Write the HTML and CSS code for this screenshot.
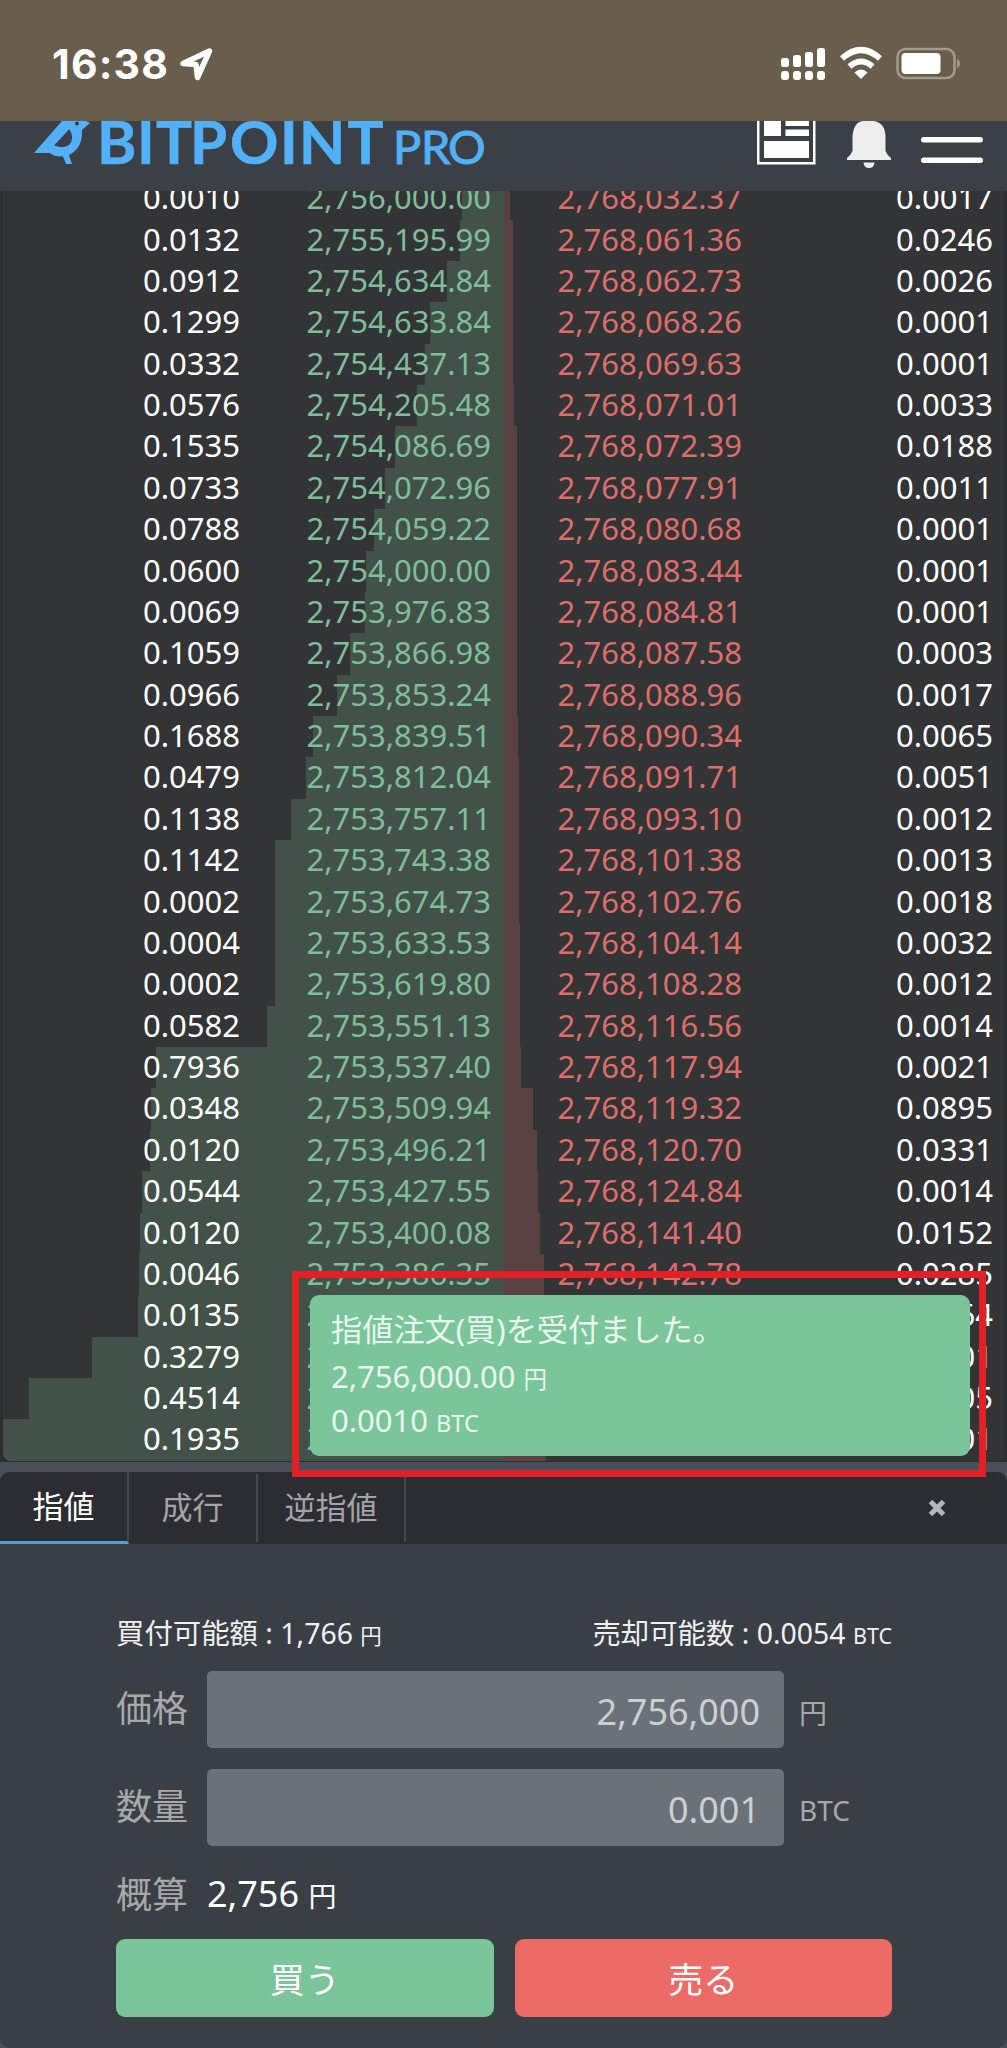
FILE: index.html
```html
<!DOCTYPE html>
<html lang="ja">
<head>
  <meta charset="UTF-8" />
  <meta name="viewport" content="width=device-width, initial-scale=1.0" />
  <title>BITPOINT PRO</title>
  <link rel="stylesheet" href="styles.css">
</head>
<body>
  <div class="app">

    <!-- Status bar -->
    <div class="status-bar">
      <div class="status-left">
        <span class="clock">16:38</span>
        <svg class="location" width="36" height="36" viewBox="0 0 36 36">
          <path d="M30.500 5 L18.500 31.500 L17 18.500 L4 17.500 Z" />
        </svg>
      </div>
      <div class="status-right">
        <svg width="46" height="36" viewBox="0 0 46 36" fill="#fff">
          <rect x="1" y="12" width="8" height="9" rx="2.5" />
          <rect x="13" y="9" width="8" height="12" rx="2.5" />
          <rect x="25" y="6" width="8" height="15" rx="2.5" />
          <rect x="37" y="2" width="8" height="19" rx="2.5" />
          <rect x="1" y="25" width="8" height="9" rx="3" />
          <rect x="13" y="25" width="8" height="9" rx="3" />
          <rect x="25" y="25" width="8" height="9" rx="3" />
          <rect x="37" y="25" width="8" height="9" rx="3" />
        </svg>
        <svg class="wifi" width="44" height="36" viewBox="0 0 44 36">
          <path d="M3 12.5 Q22 -4.500 41 12.500" />
          <path d="M10.500 20.500 Q22 10.500 33.500 20.500" />
          <path class="wifi-dot" d="M22 33 L15.500 26.500 Q22 20.500 28.500 26.500 Z" />
        </svg>
        <svg class="battery" width="66" height="36" viewBox="0 0 66 36">
          <rect x="1.5" y="3" width="57" height="29" rx="8" />
          <path class="nub" d="M61 13 Q64 14.500 64 17.500 Q64 20.500 61 22 Z" />
          <rect class="level" x="5.500" y="7" width="39" height="21" rx="4" />
        </svg>
      </div>
    </div>

    <!-- Header -->
    <header class="header">
      <svg class="logo" width="460" height="70" viewBox="0 0 460 70">
        <path fill-rule="evenodd" d="M0 32 L28 0 H52 L56 2 L48 9 Q49 27 35 34 L38 43 H32 L29 35.500 Q20 36 16 32 Z M20 24.500 L35.500 8 Q41 18 35 24 Q30 28 20 24.500 Z" />
        <circle class="eye" cx="43" cy="2.500" r="2" />
        <text class="logo-main" x="63 103 122 156 196 246 265 313.5" y="43">BITPOINT</text>
        <text class="logo-sub" x="359 387 414" y="43">PRO</text>
      </svg>
      <div class="header-icons">
        <svg width="60" height="70" viewBox="0 0 60 70" fill="#fff">
          <path d="M0 0 H2.500 V41 H56 V0 H58.500 V43.500 H0 Z" />
          <rect x="7" y="0" width="17" height="15" />
          <rect x="28.500" y="0" width="23.500" height="5" />
          <rect x="28.500" y="8.500" width="23.500" height="6.500" />
          <rect x="7" y="20" width="45" height="17" />
        </svg>
        <svg width="46" height="70" viewBox="0 0 46 70" fill="#ededed">
          <path d="M6.500 15 Q8 0 18 0 H28 Q39 2 39.500 15 V30 Q41 34 45 37 V39 H1 V37 Q5 34 6.500 30 Z" />
          <path d="M17.500 41.500 H28.500 Q28 47 23 47 Q18 47 17.500 41.500 Z" />
        </svg>
        <svg width="62" height="70" viewBox="0 0 62 70" fill="#fff">
          <rect x="0" y="16" width="62" height="5.500" rx="2.700" />
          <rect x="0" y="36.500" width="62" height="5.500" rx="2.700" />
        </svg>
      </div>
    </header>

    <!-- Order book -->
    <main class="board">
      <div class="book" id="book"></div>
    </main>

    <!-- Order panel -->
    <section class="order">
      <nav class="tabs">
        <div class="tab active">指値</div>
        <div class="tab">成行</div>
        <div class="tab wide">逆指値</div>
        <svg class="close" width="20" height="20" viewBox="0 0 20 20">
          <path d="M3.500 3.500 L16.500 16.500 M16.500 3.500 L3.500 16.500" />
        </svg>
      </nav>
      <div class="order-body">
        <div class="balance">
          <span>買付可能額 : 1,766 <small>円</small></span>
          <span>売却可能数 : 0.0054 <small>BTC</small></span>
        </div>
        <div class="field">
          <label>価格</label>
          <div class="input">2,756,000</div>
          <span class="unit">円</span>
        </div>
        <div class="field">
          <label>数量</label>
          <div class="input">0.001</div>
          <span class="unit">BTC</span>
        </div>
        <div class="field estimate">
          <label>概算</label>
          <div class="total">2,756 <small>円</small></div>
        </div>
        <div class="buttons">
          <button class="btn buy">買う</button>
          <button class="btn sell">売る</button>
        </div>
      </div>
    </section>

    <!-- Order accepted message -->
    <div class="highlight">
      <div class="toast">
        <p class="toast-title">指値注文(買)を受付ました。</p>
        <p>2,756,000.00 <small>円</small></p>
        <p>0.0010 <small>BTC</small></p>
      </div>
    </div>
  </div>

  <script src="script.js"></script>
</body>
</html>
```
FILE: styles.css
```css
:root {
  --panel: #3a3e45;
  --board: #333436;
  --green: #7ac599;
  --red: #ec6b66;
  --blue: #52b0f7;
}

* {
  box-sizing: border-box;
  margin: 0;
  padding: 0;
}

body {
  background-color: #2c2d31;
  color: #ffffff;
  font-family: "Noto Sans", "Noto Sans CJK JP", sans-serif;
}

.app {
  position: relative;
  display: flex;
  flex-direction: column;
  width: 1007px;
  height: 2048px;
  overflow: hidden;
}

/* status bar */
.status-bar {
  display: flex;
  justify-content: space-between;
  height: 121px;
  padding: 46px 45px 0 52px;
  background-color: #695d4c;
}

.status-left,
.status-right {
  display: flex;
  height: 36px;
}

.status-left {
  gap: 10px;
}

.status-right {
  gap: 13px;
}

.clock {
  width: 117px;
  font-family: Inter, sans-serif;
  font-size: 41px;
  font-weight: 700;
  line-height: 37px;
  letter-spacing: 1.2px;
  white-space: nowrap;
}

.location {
  fill: none;
  stroke: #ffffff;
  stroke-width: 5.5;
  stroke-linejoin: round;
}

.wifi path {
  fill: none;
  stroke: #ffffff;
  stroke-width: 6;
}

.wifi .wifi-dot {
  fill: #ffffff;
  stroke: none;
}

.battery rect {
  fill: none;
  stroke: #a49b8d;
  stroke-width: 2.5;
}

.battery .nub {
  fill: #a49b8d;
}

.battery .level {
  fill: #ffffff;
  stroke: none;
}

/* header */
.header {
  display: flex;
  justify-content: space-between;
  height: 70px;
  padding: 0 24px 0 34px;
  background-color: #3b3f46;
}

.logo {
  fill: var(--blue);
  font-family: Lato, sans-serif;
}

.logo .eye {
  fill: #3b3f46;
}

.logo-main {
  font-size: 60px;
  font-weight: 700;
  stroke: var(--blue);
  stroke-width: 0.6;
}

.logo-sub {
  font-size: 47px;
  font-weight: 400;
  stroke: var(--blue);
  stroke-width: 1;
}

.header-icons {
  display: flex;
  gap: 29px;
}

/* order book */
.board {
  height: 1271px;
  padding: 0 3px;
  background-color: #2d2e31;
  overflow: hidden;
}

.book {
  margin-top: -12.8px;
  background-color: var(--board);
  border-radius: 0 0 8px 8px;
  overflow: hidden;
}

.book-row {
  display: grid;
  grid-template-columns: 501px 500px;
  height: 41.385px;
  font-size: 31px;
  line-height: 39.6px;
}

.side {
  display: grid;
  align-items: start;
  background-repeat: no-repeat;
}

.bid {
  grid-template-columns: 237px 251px;
  background-image: linear-gradient(#425249, #425249);
  background-position: right top;
  text-align: right;
}

.ask {
  grid-template-columns: 238px 251px;
  background-image: linear-gradient(#5a4141, #5a4141);
  text-align: right;
}

.bid .price {
  color: #7fbd9b;
}

.ask .price {
  color: #dc6e6b;
}

/* order panel */
.order {
  display: flex;
  flex-direction: column;
  flex: 1;
  padding-top: 9.5px;
  background-color: #494e59;
}

.tabs {
  display: flex;
  align-items: center;
  height: 72.5px;
  background-color: #2c2d32;
  border-radius: 9px 9px 0 0;
  color: #a3a4a7;
  font-size: 31px;
}

.tab {
  display: flex;
  align-items: center;
  justify-content: center;
  width: 129px;
  height: 68px;
  padding-bottom: 4px;
  border-right: 2px solid #46474c;
}

.tab.wide {
  width: 148px;
}

.tab.active {
  height: 72.5px;
  border-bottom: 3px solid #539fd8;
  color: #ffffff;
}

.close {
  margin-left: auto;
  margin-right: 60px;
  fill: none;
  stroke: #b5b6b8;
  stroke-width: 5;
}

.order-body {
  flex: 1;
  padding: 66px 115px 0 116px;
  background-color: var(--panel);
  border-radius: 0 0 10px 10px;
}

.balance {
  display: flex;
  justify-content: space-between;
  height: 60.5px;
  font-size: 28.4px;
  line-height: 46px;
  color: #f0f0f1;
}

.balance small {
  font-size: 21.5px;
}

.field {
  display: grid;
  grid-template-columns: 91px 577px 1fr;
  align-items: center;
  height: 77px;
  margin-bottom: 21px;
  color: #a7a8aa;
}

.field label {
  font-size: 36px;
  line-height: 72px;
}

.input {
  height: 77px;
  padding-right: 24px;
  background-color: #6b7178;
  border-radius: 5px;
  color: #cccfd2;
  font-size: 36px;
  line-height: 82px;
  text-align: right;
}

.unit {
  padding: 6px 0 0 15px;
  font-size: 28px;
}

.estimate {
  height: 54px;
  margin-bottom: 18px;
}

.estimate label,
.total {
  line-height: 54px;
}

.total {
  color: #ffffff;
  font-size: 36px;
}

.total small {
  font-size: 28px;
}

.buttons {
  display: grid;
  grid-template-columns: 1fr 1fr;
  gap: 21px;
}

.btn {
  height: 78px;
  border: none;
  border-radius: 9px;
  color: #ffffff;
  font-family: inherit;
  font-size: 35px;
}

.buy {
  background-color: var(--green);
}

.sell {
  background-color: var(--red);
}

/* message laid over the book */
.highlight {
  position: absolute;
  left: 292px;
  top: 1271px;
  width: 694px;
  height: 206px;
  padding: 17px 9px 14px 11px;
  border: 7px solid #e42027;
}

.toast {
  height: 161px;
  padding: 11px 21px;
  background-color: var(--green);
  border-radius: 9px;
  color: #eaf7ef;
  font-size: 31px;
  line-height: 41px;
}

.toast-title {
  height: 50px;
  font-size: 31.2px;
  line-height: 46px;
}

.toast small {
  font-size: 23.5px;
}
```
FILE: script.js
```js
// [bid amount, bid price, bid depth px, ask price, ask amount, ask depth px]
const rows = [
  ['0.0010', '2,756,000.00', 42, '2,768,032.37', '0.0017', 6],
  ['0.0132', '2,755,195.99', 44, '2,768,061.36', '0.0246', 9],
  ['0.0912', '2,754,634.84', 57, '2,768,062.73', '0.0026', 9],
  ['0.1299', '2,754,633.84', 74, '2,768,068.26', '0.0001', 9],
  ['0.0332', '2,754,437.13', 79, '2,768,069.63', '0.0001', 9],
  ['0.0576', '2,754,205.48', 87, '2,768,071.01', '0.0033', 10],
  ['0.1535', '2,754,086.69', 109, '2,768,072.39', '0.0188', 13],
  ['0.0733', '2,754,072.96', 119, '2,768,077.91', '0.0011', 13],
  ['0.0788', '2,754,059.22', 130, '2,768,080.68', '0.0001', 13],
  ['0.0600', '2,754,000.00', 138, '2,768,083.44', '0.0001', 13],
  ['0.0069', '2,753,976.83', 139, '2,768,084.81', '0.0001', 13],
  ['0.1059', '2,753,866.98', 154, '2,768,087.58', '0.0003', 13],
  ['0.0966', '2,753,853.24', 167, '2,768,088.96', '0.0017', 13],
  ['0.1688', '2,753,839.51', 191, '2,768,090.34', '0.0065', 14],
  ['0.0479', '2,753,812.04', 198, '2,768,091.71', '0.0051', 15],
  ['0.1138', '2,753,757.11', 213, '2,768,093.10', '0.0012', 15],
  ['0.1142', '2,753,743.38', 229, '2,768,101.38', '0.0013', 15],
  ['0.0002', '2,753,674.73', 229, '2,768,102.76', '0.0018', 15],
  ['0.0004', '2,753,633.53', 229, '2,768,104.14', '0.0032', 16],
  ['0.0002', '2,753,619.80', 229, '2,768,108.28', '0.0012', 16],
  ['0.0582', '2,753,551.13', 237, '2,768,116.56', '0.0014', 16],
  ['0.7936', '2,753,537.40', 348, '2,768,117.94', '0.0021', 17],
  ['0.0348', '2,753,509.94', 353, '2,768,119.32', '0.0895', 29],
  ['0.0120', '2,753,496.21', 354, '2,768,120.70', '0.0331', 33],
  ['0.0544', '2,753,427.55', 362, '2,768,124.84', '0.0014', 34],
  ['0.0120', '2,753,400.08', 364, '2,768,141.40', '0.0152', 36],
  ['0.0046', '2,753,386.35', 365, '2,768,142.78', '0.0285', 40],
  ['0.0135', '2,753,372.62', 366, '2,768,144.16', '0.0064', 41],
  ['0.3279', '2,753,358.89', 412, '2,768,145.54', '0.0001', 41],
  ['0.4514', '2,753,345.16', 475, '2,768,146.92', '0.0005', 42],
  ['0.1935', '2,753,331.43', 501, '2,768,148.30', '0.0001', 42]
];

document.getElementById('book').innerHTML = rows.map(r => `
  <div class="book-row">
    <div class="side bid" style="background-size: ${r[2]}px 100%">
      <span>${r[0]}</span><span class="price">${r[1]}</span>
    </div>
    <div class="side ask" style="background-size: ${r[5]}px 100%">
      <span class="price">${r[3]}</span><span>${r[4]}</span>
    </div>
  </div>`).join('');
```
